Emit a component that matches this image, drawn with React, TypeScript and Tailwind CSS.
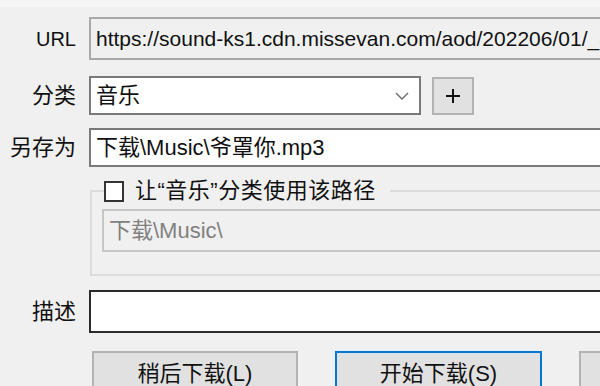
import React from 'react'

const font = { fontFamily: '"Liberation Sans", "Noto Sans CJK SC", sans-serif' }

function Label({ children }: { children: React.ReactNode }) {
  return <div className="w-[76px] shrink-0 text-right text-[22px] text-[#111] leading-none">{children}</div>
}

export default function App() {
  return (
    <div className="w-[600px] h-[386px] overflow-hidden bg-[#f0f0f0] text-[#111]" style={font}>
      <div className="h-[7px] bg-[#f6f6f6]" />
      <div className="w-[760px] pt-[10px]">
        {/* URL */}
        <div className="flex items-center gap-[13px]">
          <Label><span className="text-[20px]">URL</span></Label>
          <div className="h-[43px] flex-1 flex items-center border-2 border-[#a9a9a9] bg-[#f0f0f0] px-[5px] text-[21px] whitespace-nowrap overflow-hidden">
            https://sound-ks1.cdn.missevan.com/aod/202206/01/_a8f3c2e.mp3
          </div>
        </div>

        {/* 分类 */}
        <div className="flex items-center gap-[13px] mt-[16px]">
          <Label>分类</Label>
          <div className="h-[39px] w-[332px] flex items-center justify-between border-2 border-[#7a7a7a] bg-white pl-[5px] pr-[10px] text-[22px]">
            <span>音乐</span>
            <svg width="14" height="8" viewBox="0 0 14 8" fill="none">
              <path d="M1 1l6 6 6-6" stroke="#6b6b6b" strokeWidth="1.4" />
            </svg>
          </div>
          <button className="ml-[-2px] h-[38px] w-[42px] flex items-center justify-center border-2 border-[#b3b3b3] bg-[#e1e1e1]">
            <svg width="16" height="16" viewBox="0 0 16 16">
              <path d="M8 1v14M1 8h14" stroke="#111" strokeWidth="2" />
            </svg>
          </button>
        </div>

        {/* 另存为 */}
        <div className="flex items-center gap-[13px] mt-[13px]">
          <Label>另存为</Label>
          <div className="h-[39px] flex-1 flex items-center border-2 border-[#7a7a7a] bg-white px-[5px] text-[22px] whitespace-nowrap">
            下载\Music\爷罩你.mp3
          </div>
        </div>

        {/* group */}
        <fieldset className="ml-[90px] mt-[13px] h-[96px] border-2 border-[#dcdcdc] pl-[12px] pr-0">
          <legend className="flex items-center pr-[14px] text-[22px] leading-[22px]">
            <span className="shrink-0 block h-[21px] w-[20px] border-2 border-[#333] bg-white mr-[11px]" />
            <span className="tracking-[0.5px] whitespace-nowrap">让“音乐”分类使用该路径</span>
          </legend>
          <div className="ml-[-2px] mt-[7px] h-[43px] flex items-center border-2 border-[#c6c6c6] bg-[#f0f0f0] px-[5px] text-[22px] text-[#808080]">
            下载\Music\
          </div>
        </fieldset>

        {/* 描述 */}
        <div className="flex items-center gap-[13px] mt-[14px]">
          <Label>描述</Label>
          <div className="h-[43px] flex-1 border-2 border-[#2b2b2b] bg-white" />
        </div>

        {/* buttons */}
        <div className="flex gap-[37px] ml-[92px] mt-[18px]">
          <button className="shrink-0 h-[44px] w-[206px] border-2 border-[#b3b3b3] bg-[#e1e1e1] text-[22px]">稍后下载(L)</button>
          <button className="shrink-0 h-[44px] w-[207px] border-2 border-[#0078d7] bg-[#e1e1e1] text-[22px]">开始下载(S)</button>
          <button className="shrink-0 h-[44px] w-[206px] border-2 border-[#b3b3b3] bg-[#e1e1e1] text-[22px]">取消</button>
        </div>
      </div>
    </div>
  )
}
